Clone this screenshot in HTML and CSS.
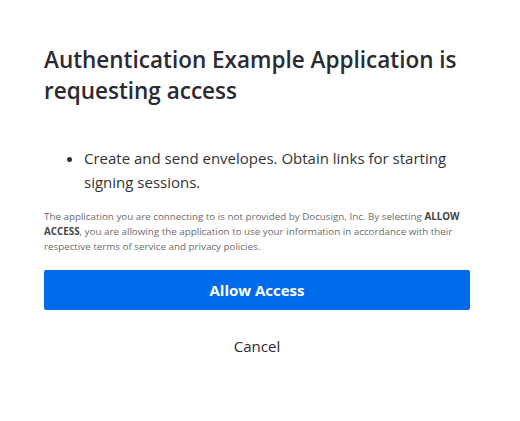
FILE: index.html
```html
<!DOCTYPE html>
<html lang="en">
<head>
  <meta charset="UTF-8" />
  <meta name="viewport" content="width=device-width, initial-scale=1.0" />
  <title>Consent</title>
  <link rel="stylesheet" href="styles.css">
</head>
<body>
  <div class="consent">
    <h1 class="title">Authentication Example Application is requesting access</h1>

    <ul class="scopes">
      <li>Create and send envelopes. Obtain links for starting signing sessions.</li>
    </ul>

    <p class="notice">
      The application you are connecting to is not provided by Docusign, Inc. By selecting <b>ALLOW ACCESS</b>, you are allowing the application to use your information in accordance with their respective terms of service and privacy policies.
    </p>

    <button class="allow">Allow Access</button>
    <button class="cancel">Cancel</button>
  </div>
</body>
</html>
```

FILE: styles.css
```css
body {
  margin: 0;
  background: #fff;
  font-family: "Open Sans", "Noto Sans", sans-serif;
  color: #2a2a33;
}

.consent {
  width: 426px;
  padding: 44px 0 0 44px;
  display: flex;
  flex-direction: column;
}

.title {
  margin: 0;
  font-size: 22.5px;
  font-weight: 600;
  line-height: 31px;
  color: #2a2a33;
}

.scopes {
  margin: 40px 0 0 0;
  padding-left: 40px;
  font-size: 15px;
  line-height: 24px;
  color: #333;
}

.notice {
  margin: 16px 0 0 0;
  font-size: 9.8px;
  line-height: 14.8px;
  color: #6b6b6b;
}

.notice b {
  color: #444;
}

.allow {
  margin-top: 16px;
  height: 40px;
  border: none;
  border-radius: 2px;
  background: #006bea;
  color: #fff;
  font-family: inherit;
  font-size: 15px;
  font-weight: 700;
  cursor: pointer;
}

.cancel {
  margin-top: 16px;
  height: 40px;
  border: none;
  background: none;
  color: #2a2a33;
  font-family: inherit;
  font-size: 15px;
  font-weight: 500;
  cursor: pointer;
}
```
